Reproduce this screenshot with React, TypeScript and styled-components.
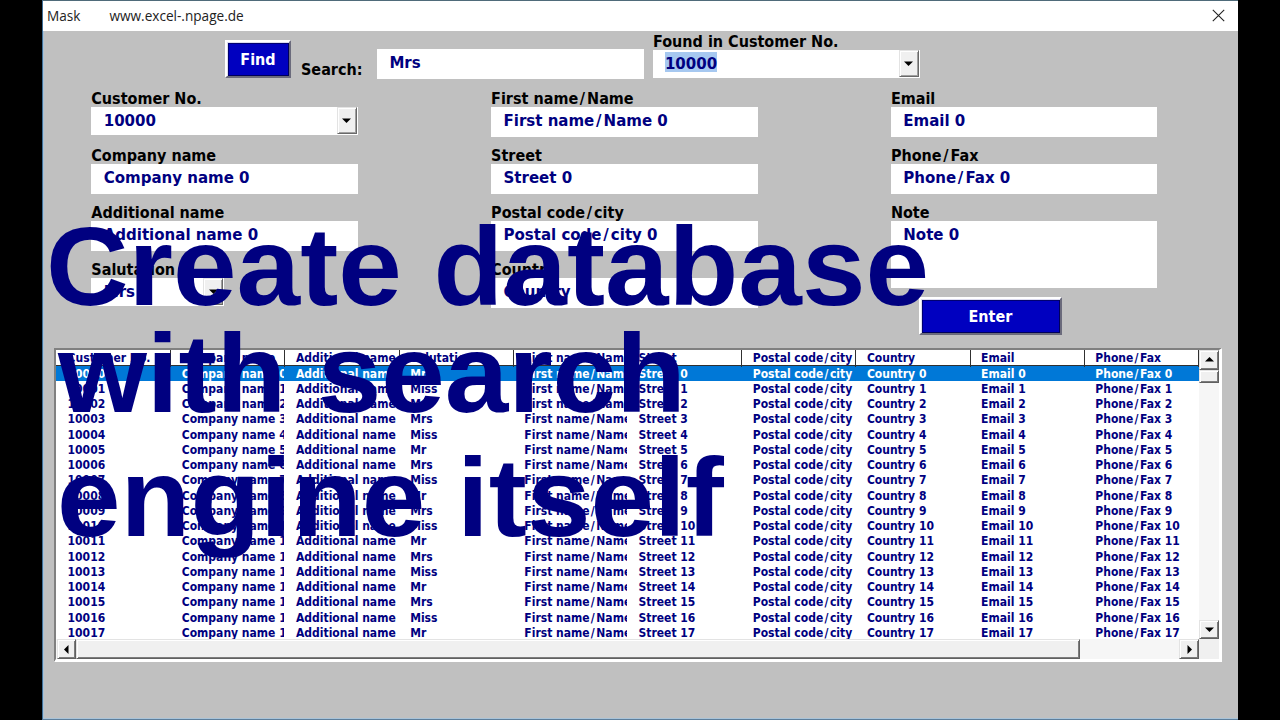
import React, { Fragment } from 'react';
import styled, { createGlobalStyle } from 'styled-components';

const NAVY = '#000080';

const GlobalStyle = createGlobalStyle`
  html, body { margin: 0; padding: 0; background: #000; overflow: hidden; }
  *, *::before, *::after { box-sizing: border-box; }
`;

const Screen = styled.div`
  position: relative;
  width: 1280px;
  height: 720px;
  overflow: hidden;
  background: #000;
  padding: 0 42px;
  font-family: 'DejaVu Sans Condensed', 'DejaVu Sans', sans-serif;
  font-stretch: condensed;
  font-weight: 700;
`;

const Dialog = styled.main`
  width: 1196px;
  height: 720px;
  display: flex;
  flex-direction: column;
  background: #c0c0c0;
  border-top: 1px solid #4f6b7a;
  border-left: 1px solid #3f6f98;
  border-bottom: 1px solid #5c7e9c;
  box-shadow: inset 1px -1px 0 #a9c3d8;
`;

const TitleBar = styled.header`
  height: 30px;
  flex: none;
  display: flex;
  align-items: center;
  padding: 0 13px 0 4px;
  background: #fff;
  color: #222;
  font: 400 13.6px/30px 'Open Sans', sans-serif;
`;

const TitleText = styled.span<{ $w?: number }>`
  width: ${p => (p.$w ? `${p.$w}px` : 'auto')};
  white-space: nowrap;
`;

const CloseIcon = styled.svg`
  margin-left: auto;
  margin-top: -1px;
  width: 13px;
  height: 13px;
`;

const SearchBar = styled.section`
  display: flex;
  align-items: flex-start;
  height: 57px;
  padding-left: 182px;
`;

const PushButton = styled.button<{ $w: number; $h: number }>`
  width: ${p => p.$w}px;
  height: ${p => p.$h}px;
  padding: 1px 0 0;
  background: #0000c0;
  border: 2px solid;
  border-color: #fff #6b6b7c #6b6b7c #fff;
  box-shadow: inset 1px 1px 0 #dcdcf0, inset -1px -1px 0 #00005a, inset 2px 2px 0 #000070;
  color: #fff;
  font: inherit;
  font-size: 16px;
  line-height: 1;
`;

const FindSlot = styled.div`
  padding-top: 9px;
  width: 76px;
`;

const Label = styled.label`
  display: block;
  height: 19px;
  line-height: 22px;
  font-size: 16px;
  color: #000;
  white-space: nowrap;
`;

const SearchLabel = styled(Label)`
  width: 76px;
  margin-top: 28px;
`;

const Control = styled.div<{ $h?: number; $w?: number }>`
  display: flex;
  justify-content: space-between;
  width: ${p => p.$w ?? 266.5}px;
  height: ${p => p.$h ?? 30}px;
  background: #fff;
  color: ${NAVY};
  font-size: 16.7px;
  line-height: 27px;
  padding-left: 12.4px;
  white-space: nowrap;
`;

const SearchControl = styled(Control)`
  margin: 18.4px 9.5px 0 0;
`;

const Highlight = styled.span`
  align-self: flex-start;
  height: 20px;
  line-height: 23px;
  margin: 2px 0 0 -0.5px;
  background: #a6c8f0;
`;

const DropButton = styled.span`
  display: flex;
  align-items: center;
  justify-content: center;
  width: 20px;
  height: 27px;
  margin-right: 1px;
  background: #f0f0f0;
  border: 1px solid;
  border-color: #e3e3e3 #696969 #696969 #e3e3e3;
  box-shadow: inset 1px 1px 0 #fff, inset -1px -1px 0 #a0a0a0;
`;

const Form = styled.section`
  display: grid;
  grid-template-columns: repeat(3, 266.5px);
  column-gap: 133.3px;
  padding-left: 48.3px;
  height: 260px;
`;

const Column = styled.div`
  display: flex;
  flex-direction: column;
  gap: 8px;
`;

const Field = styled.div`
  min-height: 49px;
`;

const EnterSlot = styled.div`
  padding: 1px 0 0 28px;
`;

const ListBox = styled.section`
  display: grid;
  grid-template-columns: 1143px 20px;
  grid-template-rows: 289px 20px;
  width: 1168px;
  height: 314px;
  margin-left: 11px;
  border: 2px solid;
  border-color: #808080 #fff #fff #808080;
  border-right-width: 3px;
  border-bottom-width: 3px;
  background: #fff;
`;

const Rows = styled.div`
  overflow: hidden;
`;

const Row = styled.div<{ $head?: boolean; $selected?: boolean }>`
  display: grid;
  grid-template-columns: repeat(10, 114.2px);
  height: ${p => (p.$head ? 15.5 : 15.25)}px;
  padding-left: 1px;
  line-height: ${p => (p.$head ? 17 : 16.4)}px;
  font-size: 12px;
  color: ${p => (p.$selected ? '#fff' : NAVY)};
  background: ${p => (p.$selected ? '#0078d7' : '#fff')};
  border-bottom: ${p => (p.$head ? '1px solid #303030' : '0')};
`;

const Cell = styled.span<{ $head?: boolean }>`
  overflow: ${p => (p.$head ? 'visible' : 'hidden')};
  white-space: nowrap;
  padding-left: 10.6px;
  border-right: 1px solid ${p => (p.$head ? '#303030' : 'transparent')};
`;

const Slash = styled.span`
  margin: 0 0.13em 0 0.1em;
`;

const VTrack = styled.div`
  display: flex;
  flex-direction: column;
  background: #f6f6f6;
`;

const HTrack = styled.div`
  display: flex;
  background: #f6f6f6;
  padding-left: 1px;
`;

const Knob = styled.div<{ $w: number; $h: number }>`
  display: flex;
  align-items: center;
  justify-content: center;
  flex: none;
  width: ${p => p.$w}px;
  height: ${p => p.$h}px;
  background: #f0f0f0;
  border: 1px solid;
  border-color: #e3e3e3 #606060 #606060 #e3e3e3;
  box-shadow: inset 1px 1px 0 #fff, inset -1px -1px 0 #7c7c7c;
`;

const TrackSpace = styled.div`
  flex: 1;
`;

const Corner = styled.div`
  background: #f0f0f0;
`;

const Headline = styled.h1`
  position: absolute;
  left: 46px;
  top: 200px;
  margin: 0;
  color: ${NAVY};
  font: 700 114.3px/132px 'Liberation Sans', Arial, sans-serif;
  white-space: nowrap;
  pointer-events: none;
`;

const HeadlineLine = styled.span<{ $indent: number; $h: number; $ls?: number; $clip?: boolean }>`
  display: block;
  height: ${p => p.$h}px;
  margin-left: ${p => p.$indent}px;
  letter-spacing: ${p => p.$ls ?? 0}px;
  overflow: ${p => (p.$clip ? 'hidden' : 'visible')};
  transform: scaleY(0.98);
  transform-origin: 0 105px;
`;

type Direction = 'up' | 'down' | 'left' | 'right';
const ARROWS: Record<Direction, string> = {
  up: 'M0 6.5L4.5 2L9 6.5Z',
  down: 'M0 2.5L4.5 7L9 2.5Z',
  left: 'M6.5 0L2 4.5L6.5 9Z',
  right: 'M2.5 0L7 4.5L2.5 9Z',
};

const Arrow = ({ dir }: { dir: Direction }) => (
  <svg width="9" height="9" viewBox="0 0 9 9"><path d={ARROWS[dir]} fill="#000" /></svg>
);

/* Gives the slash the wide side bearings it has in the dialog's typeface. */
const Spaced = ({ text }: { text: string }) => (
  <span>
    {text.split('/').map((part, i) => (
      <Fragment key={i}>{i > 0 && <Slash>/</Slash>}{part}</Fragment>
    ))}
  </span>
);

const Combo = ({ value, width }: { value: string; width?: number }) => (
  <Control $h={28} $w={width}>
    <span>{value}</span>
    <DropButton><Arrow dir="down" /></DropButton>
  </Control>
);

const TextField = ({ label, value, height }: { label: string; value: string; height?: number }) => (
  <Field>
    <Label><Spaced text={label} /></Label>
    <Control $h={height}><Spaced text={value} /></Control>
  </Field>
);

const HEADERS = ['Customer No.', 'Company name', 'Additional name', 'Salutation', 'First name/Name',
  'Street', 'Postal code/city', 'Country', 'Email', 'Phone/Fax'];
const SALUTATIONS = ['Mrs', 'Miss', 'Mr'];

const RECORDS = Array.from({ length: 18 }, (_, i) => [
  String(10000 + i), `Company name ${i}`, 'Additional name', SALUTATIONS[i % 3], 'First name/Name',
  `Street ${i}`, 'Postal code/city', `Country ${i}`, `Email ${i}`, `Phone/Fax ${i}`,
]);

export default function App() {
  return (
    <Screen>
      <GlobalStyle />
      <Dialog>
        <TitleBar>
          <TitleText $w={62.5}>Mask</TitleText>
          <TitleText>www.excel-.npage.de</TitleText>
          <CloseIcon viewBox="0 0 13 13"><path d="M.8.8L12.2 12.2M12.2.8L.8 12.2" stroke="#222" strokeWidth="1.1" /></CloseIcon>
        </TitleBar>
        <SearchBar>
          <FindSlot><PushButton $w={66} $h={38}>Find</PushButton></FindSlot>
          <SearchLabel>Search:</SearchLabel>
          <SearchControl>Mrs</SearchControl>
          <div>
            <Label>Found in Customer No.</Label>
            <Control $h={28}>
              <Highlight>10000</Highlight>
              <DropButton><Arrow dir="down" /></DropButton>
            </Control>
          </div>
        </SearchBar>
        <Form>
          <Column>
            <Field><Label>Customer No.</Label><Combo value="10000" /></Field>
            <TextField label="Company name" value="Company name 0" />
            <TextField label="Additional name" value="Additional name 0" />
            <Field><Label>Salutation</Label><Combo value="Mrs" width={133} /></Field>
          </Column>
          <Column>
            <TextField label="First name/Name" value="First name/Name 0" />
            <TextField label="Street" value="Street 0" />
            <TextField label="Postal code/city" value="Postal code/city 0" />
            <TextField label="Country" value="Country 0" />
          </Column>
          <Column>
            <TextField label="Email" value="Email 0" />
            <TextField label="Phone/Fax" value="Phone/Fax 0" />
            <TextField label="Note" value="Note 0" height={67} />
            <EnterSlot><PushButton $w={143} $h={38}>Enter</PushButton></EnterSlot>
          </Column>
        </Form>
        <ListBox>
          <Rows>
            <Row $head>{HEADERS.map(h => <Cell $head key={h}><Spaced text={h} /></Cell>)}</Row>
            {RECORDS.map((record, i) => (
              <Row key={record[0]} $selected={i === 0}>
                {record.map((text, c) => <Cell key={c}><Spaced text={text} /></Cell>)}
              </Row>
            ))}
          </Rows>
          <VTrack>
            <Knob $w={20} $h={19.5}><Arrow dir="up" /></Knob>
            <Knob $w={20} $h={13} />
            <TrackSpace />
            <Knob $w={20} $h={19.5}><Arrow dir="down" /></Knob>
          </VTrack>
          <HTrack>
            <Knob $w={19} $h={20}><Arrow dir="left" /></Knob>
            <Knob $w={1004} $h={20} />
            <TrackSpace />
            <Knob $w={20} $h={20}><Arrow dir="right" /></Knob>
          </HTrack>
          <Corner />
        </ListBox>
      </Dialog>
      <Headline>
        <HeadlineLine $indent={0} $h={107}>Create database</HeadlineLine>
        <HeadlineLine $indent={12} $h={123.5} $ls={-0.1}>with search</HeadlineLine>
        <HeadlineLine $indent={11} $h={127} $clip>engine itself</HeadlineLine>
      </Headline>
    </Screen>
  );
}
